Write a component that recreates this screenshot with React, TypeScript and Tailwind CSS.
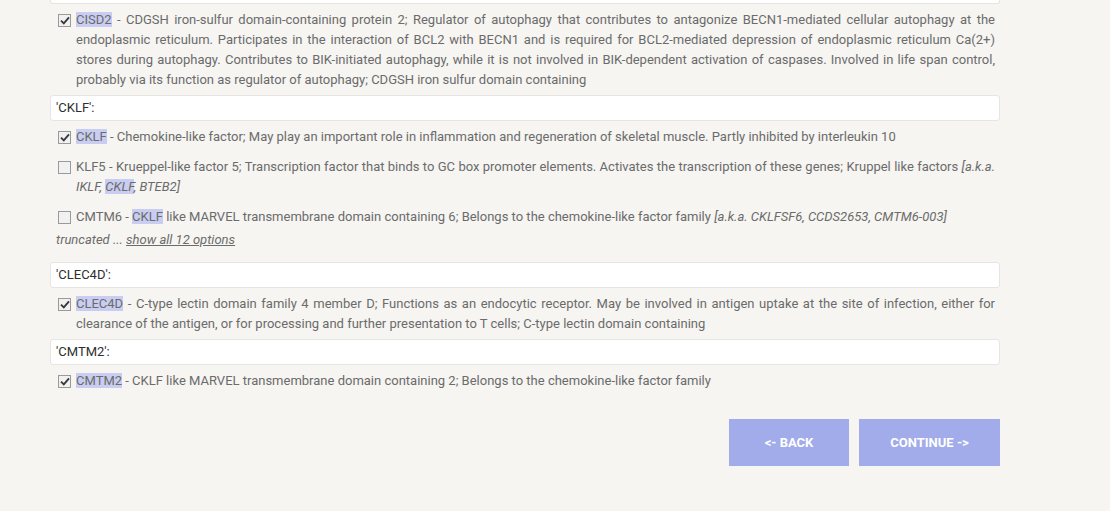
import React from "react";

type Option = {
  checked: boolean;
  symbol: string;
  highlightSymbol?: boolean;
  desc: React.ReactNode;
  aka?: React.ReactNode;
};

function Mark({ children }: { children: React.ReactNode }) {
  return <span className="bg-[#c9cdf1]">{children}</span>;
}

function Checkbox({ checked }: { checked: boolean }) {
  return (
    <span className="absolute left-[8px] top-[10px] flex h-[13px] w-[13px] items-center justify-center border border-[#9a9a9a] bg-[#f1f1f1]">
      {checked && (
        <svg width="10" height="9" viewBox="0 0 10 9">
          <path d="M1 4.6 L3.8 7.4 L9 1.4" fill="none" stroke="#3a3a3a" strokeWidth="1.9" />
        </svg>
      )}
    </span>
  );
}

function Item({ o }: { o: Option }) {
  return (
    <div className="relative pt-[6px] pb-[4px] pl-[26px] pr-[5px]">
      <Checkbox checked={o.checked} />
      <p className="text-justify leading-[20px]">
        {o.highlightSymbol ? <Mark>{o.symbol}</Mark> : o.symbol} - {o.desc}
        {o.aka && (
          <>
            {" "}
            <i>{o.aka}</i>
          </>
        )}
      </p>
    </div>
  );
}

function Header({ label }: { label: string }) {
  return (
    <div className="mt-px h-[26px] rounded-[3px] border border-[#e6e5e1] bg-white px-[5px] leading-[24px] text-[#2e2e2e]">
      '{label}':
    </div>
  );
}

export default function App() {
  return (
    <div
      className="min-h-[511px] bg-[#f6f5f2] text-[13px] text-[#6b6b6b]"
      style={{ fontFamily: "Roboto, 'Liberation Sans', sans-serif" }}
    >
      <div className="ml-[50px] w-[950px]">
        {/* tail of the previous header box */}
        <div className="h-[4px] rounded-b-[3px] border border-t-0 border-[#e6e5e1] bg-white" />

        <Item
          o={{
            checked: true,
            symbol: "CISD2",
            highlightSymbol: true,
            desc: "CDGSH iron-sulfur domain-containing protein 2; Regulator of autophagy that contributes to antagonize BECN1-mediated cellular autophagy at the endoplasmic reticulum. Participates in the interaction of BCL2 with BECN1 and is required for BCL2-mediated depression of endoplasmic reticulum Ca(2+) stores during autophagy. Contributes to BIK-initiated autophagy, while it is not involved in BIK-dependent activation of caspases. Involved in life span control, probably via its function as regulator of autophagy; CDGSH iron sulfur domain containing",
          }}
        />

        <Header label="CKLF" />
        <Item
          o={{
            checked: true,
            symbol: "CKLF",
            highlightSymbol: true,
            desc: "Chemokine-like factor; May play an important role in inflammation and regeneration of skeletal muscle. Partly inhibited by interleukin 10",
          }}
        />
        <Item
          o={{
            checked: false,
            symbol: "KLF5",
            desc: "Krueppel-like factor 5; Transcription factor that binds to GC box promoter elements. Activates the transcription of these genes; Kruppel like factors",
            aka: (
              <>
                [a.k.a. IKLF, <Mark>CKLF</Mark>, BTEB2]
              </>
            ),
          }}
        />
        <Item
          o={{
            checked: false,
            symbol: "CMTM6",
            desc: (
              <>
                <Mark>CKLF</Mark> like MARVEL transmembrane domain containing 6; Belongs to the chemokine-like factor family
              </>
            ),
            aka: "[a.k.a. CKLFSF6, CCDS2653, CMTM6-003]",
          }}
        />
        <div className="-mt-px mb-[12px] pl-[6px] leading-[20px] italic">
          truncated ... <span className="underline">show all 12 options</span>
        </div>

        <Header label="CLEC4D" />
        <Item
          o={{
            checked: true,
            symbol: "CLEC4D",
            highlightSymbol: true,
            desc: "C-type lectin domain family 4 member D; Functions as an endocytic receptor. May be involved in antigen uptake at the site of infection, either for clearance of the antigen, or for processing and further presentation to T cells; C-type lectin domain containing",
          }}
        />

        <Header label="CMTM2" />
        <Item
          o={{
            checked: true,
            symbol: "CMTM2",
            highlightSymbol: true,
            desc: "CKLF like MARVEL transmembrane domain containing 2; Belongs to the chemokine-like factor family",
          }}
        />

        <div className="mt-[24px] flex justify-end gap-[10px]">
          <button className="h-[47px] w-[120px] bg-[#a2acea] text-[13px] font-bold text-white">
            &lt;- BACK
          </button>
          <button className="h-[47px] w-[141px] bg-[#a2acea] text-[13px] font-bold text-white">
            CONTINUE -&gt;
          </button>
        </div>
      </div>
    </div>
  );
}
